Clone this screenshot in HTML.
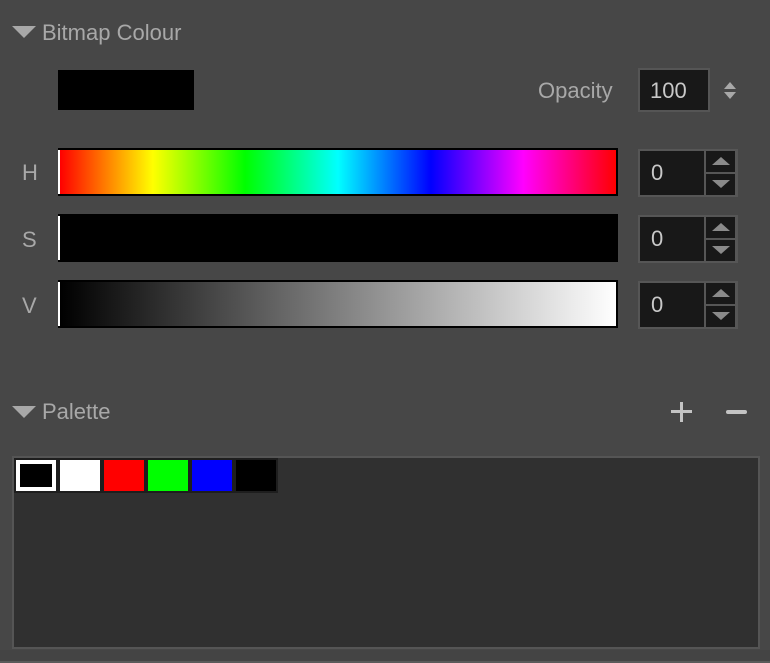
<!DOCTYPE html>
<html><head><style>
*{margin:0;padding:0;box-sizing:border-box}
body{width:770px;height:663px;background:#474747;font-family:"Liberation Sans",sans-serif;color:#a8a8a8;position:relative;overflow:hidden}
.a{position:absolute}
.tri{width:0;height:0;border-left:12px solid transparent;border-right:12px solid transparent;border-top:12px solid #a8a8a8}
.lbl{font-size:22px}
.bar{position:absolute;left:58px;width:560px;border:2px solid #000}
.bar:before{content:"";position:absolute;left:-2px;top:0;bottom:0;width:2px;background:#fff}
.num{position:absolute;left:638px;width:100px;background:#565656;padding:2px;height:48px}
.num .f{position:absolute;left:2px;top:2px;width:64px;height:44px;background:#181818;color:#c8c8c8;font-size:22px;line-height:44px;padding-left:11px}
.num .u,.num .d{position:absolute;left:68px;width:29px;height:21px;background:#181818}
.num .u{top:2px}.num .d{top:25px}
.num .u:after{content:"";position:absolute;left:6px;top:6px;border-left:9px solid transparent;border-right:9px solid transparent;border-bottom:8px solid #8a8a8a}
.num .d:after{content:"";position:absolute;left:6px;top:6px;border-left:9px solid transparent;border-right:9px solid transparent;border-top:8px solid #8a8a8a}
.sw{position:absolute;top:460px;width:40px;height:31px}
</style></head><body>
<div class="a tri" style="left:12px;top:26px"></div>
<div class="a lbl" style="left:42px;top:20px">Bitmap Colour</div>
<div class="a" style="left:58px;top:70px;width:136px;height:40px;background:#000"></div>
<div class="a lbl" style="left:538px;top:78px">Opacity</div>
<div class="a" style="left:638px;top:68px;width:72px;height:44px;background:#555;padding:2px"><div style="background:#181818;height:40px;color:#c8c8c8;font-size:22px;line-height:42px;padding-left:10px">100</div></div>
<div class="a" style="left:724px;top:82px;border-left:6px solid transparent;border-right:6px solid transparent;border-bottom:7px solid #a8a8a8"></div>
<div class="a" style="left:724px;top:92px;border-left:6px solid transparent;border-right:6px solid transparent;border-top:7px solid #a8a8a8"></div>

<div class="a lbl" style="left:22px;top:160px">H</div>
<div class="bar" style="top:148px;height:48px;background:linear-gradient(90deg,#f00,#ff0 16.7%,#0f0 33.3%,#0ff 50%,#00f 66.7%,#f0f 83.3%,#f00)"></div>
<div class="a lbl" style="left:22px;top:227px">S</div>
<div class="bar" style="top:214px;height:48px;background:#000"></div>
<div class="a lbl" style="left:22px;top:293px">V</div>
<div class="bar" style="top:280px;height:48px;background:linear-gradient(90deg,#000,#fff)"></div>

<div class="num" style="top:149px"><div class="f">0</div><div class="u"></div><div class="d"></div></div>
<div class="num" style="top:215px"><div class="f">0</div><div class="u"></div><div class="d"></div></div>
<div class="num" style="top:281px"><div class="f">0</div><div class="u"></div><div class="d"></div></div>

<div class="a tri" style="left:12px;top:406px"></div>
<div class="a lbl" style="left:42px;top:399px">Palette</div>
<div class="a" style="left:671px;top:410px;width:21px;height:3px;background:#c4c4c4"></div>
<div class="a" style="left:680px;top:402px;width:3px;height:20px;background:#c4c4c4"></div>
<div class="a" style="left:726px;top:410px;width:21px;height:4px;background:#c4c4c4;border-radius:2px"></div>

<div class="a" style="left:12px;top:456px;width:748px;height:193px;background:#303030;border:2px solid #555"></div>
<div class="a" style="left:14px;top:458px;width:264px;height:35px;background:#1e1e1e"></div>
<div class="sw" style="left:16px;background:#000;border:4px solid #fff"></div>
<div class="sw" style="left:60px;background:#fff"></div>
<div class="sw" style="left:104px;background:#f00"></div>
<div class="sw" style="left:148px;background:#0f0"></div>
<div class="sw" style="left:192px;background:#00f"></div>
<div class="sw" style="left:236px;background:#000"></div>
<div class="a" style="left:0;top:650px;width:770px;height:12px;background:#444"></div>
<div class="a" style="left:0;top:661px;width:770px;height:2px;background:#5a5a5a"></div>
</body></html>
